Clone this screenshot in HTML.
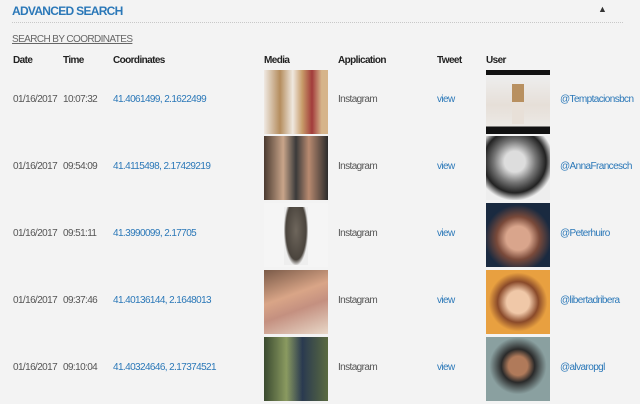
<!DOCTYPE html>
<html><head><meta charset="utf-8"><style>
body{margin:0;width:640px;height:404px;background:#f3f3f3;overflow:hidden;position:relative;font-family:"Liberation Sans",sans-serif;font-size:10px;letter-spacing:-0.6px;color:#555}
.a{position:absolute;white-space:nowrap}
.h{font-weight:bold;color:#222}
.l{color:#2b78b8}
.im{position:absolute;width:64px;height:64px}
</style></head><body>
<div class="a" style="left:12px;top:4px;font-weight:bold;font-size:12px;letter-spacing:-0.7px;color:#2b78b8">ADVANCED SEARCH</div>
<div class="a" style="left:12px;top:22px;width:611px;border-top:1px dotted #c8c8c8"></div>
<div class="a" style="left:598px;top:4px;font-size:9px;color:#333">▲</div>
<div class="a" style="left:12px;top:34px;color:#666;text-decoration:underline">SEARCH BY COORDINATES</div>
<div class="a h" style="left:13px;top:55px">Date</div>
<div class="a h" style="left:63px;top:55px">Time</div>
<div class="a h" style="left:113px;top:55px">Coordinates</div>
<div class="a h" style="left:264px;top:55px">Media</div>
<div class="a h" style="left:338px;top:55px">Application</div>
<div class="a h" style="left:437px;top:55px">Tweet</div>
<div class="a h" style="left:486px;top:55px">User</div>

<div class="a" style="left:13px;top:94px">01/16/2017</div><div class="a" style="left:63px;top:94px">10:07:32</div><div class="a l" style="left:113px;top:94px">41.4061499, 2.1622499</div><div class="a" style="left:338px;top:94px">Instagram</div><div class="a l" style="left:437px;top:94px">view</div><div class="a l" style="left:560px;top:94px">@Temptacionsbcn</div>
<div class="im" style="left:264px;top:70px;background:linear-gradient(90deg,#efe9e2,#b58d5e 25%,#efe8df 45%,#c79a68 60%,#a23b3b 75%,#d6b48a 90%)"></div>
<div class="im" style="left:486px;top:70px;background:linear-gradient(#111 0 8%,#eee 8%,#e6dfd8 55%,#ece9e5 88%,#111 88%)"><div style="position:absolute;left:26px;top:14px;width:12px;height:40px;background:linear-gradient(#b89060 45%,#e8e0d8 45%)"></div></div>

<div class="a" style="left:13px;top:161px">01/16/2017</div><div class="a" style="left:63px;top:161px">09:54:09</div><div class="a l" style="left:113px;top:161px">41.4115498, 2.17429219</div><div class="a" style="left:338px;top:161px">Instagram</div><div class="a l" style="left:437px;top:161px">view</div><div class="a l" style="left:560px;top:161px">@AnnaFrancesch</div>
<div class="im" style="left:264px;top:136px;background:linear-gradient(90deg,#4a3a30,#c9a58a 30%,#3a3a3a 50%,#b88a70 70%,#2c2c2c)"></div>
<div class="im" style="left:486px;top:136px;background:radial-gradient(circle at 45% 40%,#ddd 20%,#777 40%,#222 60%,#eee 75%)"></div>

<div class="a" style="left:13px;top:228px">01/16/2017</div><div class="a" style="left:63px;top:228px">09:51:11</div><div class="a l" style="left:113px;top:228px">41.3990099, 2.17705</div><div class="a" style="left:338px;top:228px">Instagram</div><div class="a l" style="left:437px;top:228px">view</div><div class="a l" style="left:560px;top:228px">@Peterhuiro</div>
<div class="im" style="left:264px;top:203px;background:#f5f5f5"><div style="position:absolute;left:20px;top:4px;width:24px;height:58px;background:radial-gradient(ellipse at 50% 40%,#6e665c,#4a443d 60%,#eee 72%)"></div></div>
<div class="im" style="left:486px;top:203px;background:radial-gradient(circle at 50% 55%,#d9a58c 25%,#7a4a3a 45%,#1a2a40 70%)"></div>

<div class="a" style="left:13px;top:295px">01/16/2017</div><div class="a" style="left:63px;top:295px">09:37:46</div><div class="a l" style="left:113px;top:295px">41.40136144, 2.1648013</div><div class="a" style="left:338px;top:295px">Instagram</div><div class="a l" style="left:437px;top:295px">view</div><div class="a l" style="left:560px;top:295px">@libertadribera</div>
<div class="im" style="left:264px;top:270px;background:linear-gradient(160deg,#7a5a48,#d9a587 40%,#c49080 60%,#e8d8c8)"></div>
<div class="im" style="left:486px;top:270px;background:radial-gradient(circle at 50% 50%,#f0c8a8 25%,#8a4a2a 45%,#e8a040 65%)"></div>

<div class="a" style="left:13px;top:362px">01/16/2017</div><div class="a" style="left:63px;top:362px">09:10:04</div><div class="a l" style="left:113px;top:362px">41.40324646, 2.17374521</div><div class="a" style="left:338px;top:362px">Instagram</div><div class="a l" style="left:437px;top:362px">view</div><div class="a l" style="left:560px;top:362px">@alvaropgl</div>
<div class="im" style="left:264px;top:337px;background:linear-gradient(90deg,#3a4a30,#8a9a60 35%,#2a3a50 60%,#5a6a40)"></div>
<div class="im" style="left:486px;top:337px;background:radial-gradient(circle at 50% 45%,#b07a5a 20%,#2a2a2a 35%,#8aa0a0 60%)"></div>
</body></html>
